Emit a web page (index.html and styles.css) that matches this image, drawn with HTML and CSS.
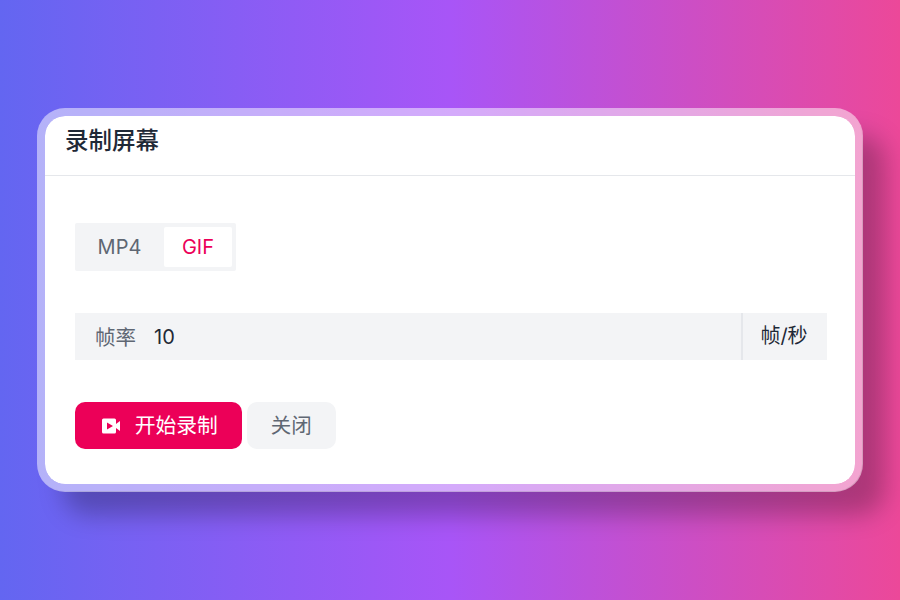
FILE: index.html
```html
<!doctype html>
<html lang="zh">
<head>
    <meta charset="utf-8">
    <title>录制屏幕</title>
    <link rel="stylesheet" href="styles.css">
</head>
<body>
    <div class="card">
        <div class="card-header">录制屏幕</div>
        <div class="card-body">
            <div class="tabs">
                <span class="tab">MP4</span>
                <span class="tab active">GIF</span>
            </div>
            <div class="input-group">
                <span class="input-label">帧率</span>
                <span class="input-value">10</span>
                <span class="input-unit">帧/秒</span>
            </div>
            <div class="actions">
                <button class="btn btn-primary">
                    <svg class="btn-icon" viewBox="0 0 18 16" width="18" height="16">
                        <path fill="#fff" fill-rule="evenodd" d="M1.500 .5h11a1.500 1.500 0 0 1 1.500 1.500v12a1.500 1.500 0 0 1-1.500 1.500h-11A1.500 1.500 0 0 1 0 14V2A1.500 1.500 0 0 1 1.500 .5zM5 4.500v7L11 8z"/>
                        <path fill="#fff" d="M14 6l4-3v10l-4-3z"/>
                    </svg>
                    <span class="btn-text">开始录制</span>
                </button>
                <button class="btn btn-light"><span class="btn-text">关闭</span></button>
            </div>
        </div>
    </div>
</body>
</html>
```

FILE: styles.css
```css
* {
    box-sizing: border-box;
}
body {
    margin: 0;
    height: 600px;
    display: flex;
    align-items: center;
    justify-content: center;
    font-family: Inter, "Noto Sans CJK SC", sans-serif;
    background: linear-gradient(to right, #6366f1, #a855f7, #ec4899);
    overflow: hidden;
}
.card {
    width: 826px;
    height: 384px;
    background-color: #fff;
    background-clip: padding-box;
    border: 8px solid rgba(255, 255, 255, 0.5);
    border-radius: 28px;
    box-shadow: 24px 25px 25px -2px rgba(0, 0, 0, 0.25);
}
.card-header {
    height: 60px;
    padding: 8px 20px 0;
    line-height: 34px;
    font-size: 23.5px;
    font-weight: 500;
    color: #1f2937;
    border-bottom: 1px solid #e5e7eb;
}
.card-body {
    padding: 47px 28px 0 30px;
}
.tabs {
    display: inline-flex;
    height: 48px;
    padding: 4px;
    background-color: #f3f4f6;
    border-radius: 2px;
}
.tab {
    width: 68px;
    line-height: 40px;
    text-align: center;
    font-size: 20px;
    color: #5f6773;
    border-radius: 2px;
}
.tab:first-child {
    width: 85px;
    padding-right: 4px;
}
.tab.active {
    background-color: #fff;
    color: #ec0058;
}
.input-group {
    display: flex;
    align-items: center;
    height: 47px;
    margin-top: 42px;
    background-color: #f3f4f6;
    font-size: 20px;
}
.input-label {
    padding: 0 19px 2px 20px;
    font-size: 20.5px;
    color: #5f6773;
}
.input-value {
    flex: 1;
    margin-left: -1px;
    color: #1f2937;
}
.input-unit {
    width: 86px;
    height: 100%;
    padding-right: 2px;
    line-height: 46px;
    text-align: center;
    color: #1f2937;
    border-left: 2px solid #e5e7eb;
}
.actions {
    display: flex;
    gap: 5.5px;
    margin-top: 42px;
}
.btn {
    display: flex;
    align-items: center;
    justify-content: center;
    height: 47px;
    padding: 0;
    border: 0;
    border-radius: 10px;
    font-family: inherit;
    font-size: 20.5px;
}
.btn-text {
    padding-bottom: 3px;
}
.btn-primary {
    width: 166.5px;
    padding-left: 3px;
    background-color: #ec0058;
    color: #fff;
}
.btn-primary .btn-text {
    font-size: 20.8px;
}
.btn-light {
    width: 88.5px;
    background-color: #f3f4f6;
    color: #5f6773;
}
.btn-icon {
    margin-right: 15px;
}
```
